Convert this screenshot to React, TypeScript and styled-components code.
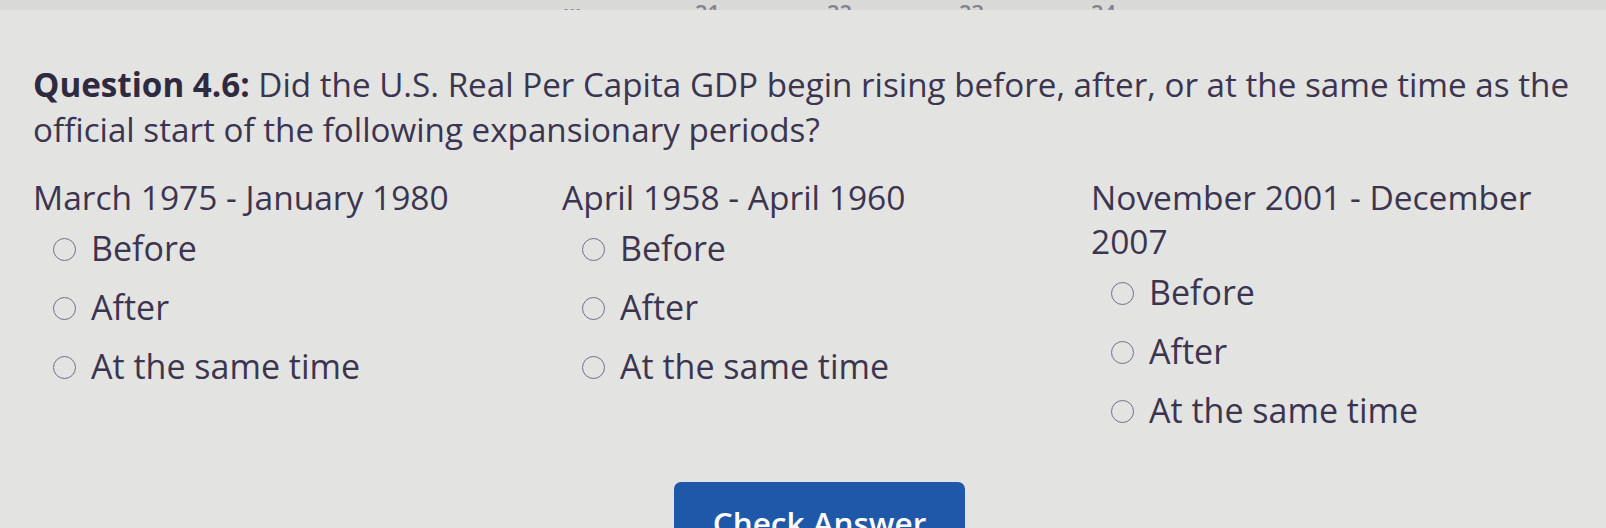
import React from 'react';
import styled, { createGlobalStyle } from 'styled-components';

const GlobalStyle = createGlobalStyle`
  html, body {
    margin: 0;
    padding: 0;
    background: #e3e3e2;
  }
  body {
    font-family: 'Open Sans', 'Liberation Sans', sans-serif;
    color: #3b3550;
  }
`;

const Page = styled.div`
  width: 1606px;
  height: 528px;
  overflow: hidden;
  background: #e3e3e2;
`;

const TopStrip = styled.div`
  height: 10px;
  overflow: hidden;
  background: #d9d9d8;
  display: flex;
  align-items: flex-end;
  padding-left: 563px;
  gap: 96px;
`;

const StripItem = styled.span`
  font-size: 22px;
  font-weight: 600;
  line-height: 16px;
  width: 36px;
  color: #85828f;
  transform: translateY(10px);
`;

const Main = styled.main`
  padding: 52px 0 0 33px;
`;

const Title = styled.h1`
  margin: 0;
  font-size: 33.2px;
  line-height: 45px;
  font-weight: 400;
  color: #3b3550;
  max-width: 1560px;

  strong {
    font-weight: 700;
    color: #2f2a40;
  }
`;

const Columns = styled.div`
  display: grid;
  grid-template-columns: 500px 500px 500px;
  column-gap: 29px;
  margin-top: 23px;
  align-items: start;
`;

const Column = styled.div`
  display: flex;
  flex-direction: column;
`;

const Period = styled.div`
  font-size: 33.5px;
  line-height: 44px;
  margin-bottom: 7px;
  padding-right: 20px;
`;

const Options = styled.div`
  display: flex;
  flex-direction: column;
  gap: 14px;
  padding-left: 20px;
`;

const Option = styled.label`
  display: flex;
  align-items: center;
  gap: 15px;
  font-size: 34px;
  line-height: 45px;
  cursor: pointer;
`;

const RadioCircle = styled.span`
  box-sizing: border-box;
  width: 23px;
  height: 23px;
  border: 1.7px solid #736f88;
  border-radius: 50%;
  flex: none;
  margin-top: 2px;
`;

const Footer = styled.div`
  display: flex;
  justify-content: center;
  margin-top: 49px;
`;

const CheckButton = styled.button`
  width: 291px;
  height: 64px;
  border: none;
  border-radius: 7px;
  background: #1f58a9;
  color: #ffffff;
  font-family: 'Open Sans', 'Liberation Sans', sans-serif;
  font-size: 31.5px;
  font-weight: 600;
  padding: 17px 0 0;
  line-height: 40px;
  text-align: center;
  cursor: pointer;
`;

const periods = [
  'March 1975 - January 1980',
  'April 1958 - April 1960',
  'November 2001 - December 2007',
];

const choices = ['Before', 'After', 'At the same time'];

const App = () => {
  return (
    <Page>
      <GlobalStyle />
      <TopStrip>
        {['ııı', '21', '22', '23', '24'].map((t) => (
          <StripItem key={t}>{t}</StripItem>
        ))}
      </TopStrip>
      <Main>
        <Title>
          <strong>Question 4.6:</strong> Did the U.S. Real Per Capita GDP begin rising
          before, after, or at the same time as the official start of the following
          expansionary periods?
        </Title>
        <Columns>
          {periods.map((period) => (
            <Column key={period}>
              <Period>{period}</Period>
              <Options>
                {choices.map((choice) => (
                  <Option key={choice}>
                    <RadioCircle />
                    {choice}
                  </Option>
                ))}
              </Options>
            </Column>
          ))}
        </Columns>
        <Footer>
          <CheckButton>Check Answer</CheckButton>
        </Footer>
      </Main>
    </Page>
  );
};

export default App;
